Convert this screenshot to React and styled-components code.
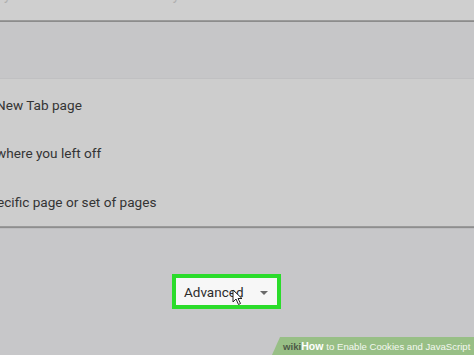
import { createGlobalStyle, styled } from "styled-components";

const GlobalStyle = createGlobalStyle`
  html, body {
    margin: 0;
    padding: 0;
    background: #c7c7c9;
    font-family: Roboto, "Liberation Sans", Arial, sans-serif;
  }
`;

const Page = styled.div`
  position: relative;
  width: 474px;
  height: 355px;
  overflow: hidden;
  background: #c7c7c9;
`;

const TopCard = styled.div`
  height: 20px;
  overflow: hidden;
  background: #cfcfcf;
  box-shadow: 0 1px 0 #9a9a9a, 0 2px 1px #8c8c8c;
`;

const CutText = styled.div`
  margin-top: -13px;
  padding-left: 4px;
  font-size: 14px;
  color: #8a8a8a;
  opacity: 0.45;
`;

const Band = styled.div`
  height: 56px;
  margin-top: 2px;
  background: #c6c6c8;
  border-bottom: 1px solid #c0c0c2;
`;

const Card = styled.div`
  display: flex;
  flex-direction: column;
  padding-top: 2px;
  height: 147px;
  box-sizing: border-box;
  background: #cdcdcd;
  box-shadow: 0 1px 0 #9a9a9a, 0 2px 1px #8e8e8e;
`;

const Row = styled.div`
  height: 49.5px;
  display: flex;
  align-items: center;
  margin-left: ${(p) => p.$shift}px;
  font-size: 13.6px;
  color: #343434;
  white-space: nowrap;
`;

const Footer = styled.div`
  padding: 48px 0 0 172px;
`;

const Button = styled.div`
  position: relative;
  box-sizing: border-box;
  width: 109px;
  height: 35px;
  display: flex;
  align-items: center;
  justify-content: space-between;
  padding: 0 9px 0 8px;
  background: #f7f7f7;
  border: 4px solid #2bdc2b;
  font-size: 13.5px;
  color: #2c2c2c;
`;

const Caret = styled.span`
  width: 0;
  height: 0;
  margin-top: 2px;
  border-left: 4.5px solid transparent;
  border-right: 4.5px solid transparent;
  border-top: 4.5px solid #6a6a6a;
`;

const Cursor = styled.svg`
  position: absolute;
  left: 56px;
  top: 11px;
`;

const Badge = styled.div`
  position: absolute;
  right: 0;
  bottom: 0;
  width: 202px;
  height: 18px;
  display: flex;
  align-items: center;
  padding-left: 11px;
  box-sizing: border-box;
  background: #98bf86;
  clip-path: polygon(8px 0, 100% 0, 100% 100%, 0 100%);
  font-family: "Liberation Sans", Arial, sans-serif;
  font-size: 9.6px;
  color: #f4f8f0;
  white-space: nowrap;
`;

const Wiki = styled.b`
  color: #4e5a48;
`;

const How = styled.b`
  color: #ffffff;
  font-size: 10.5px;
  margin-right: 3px;
`;

export default function App() {
  return (
    <Page>
      <GlobalStyle />
      <TopCard>
        <CutText>y Tabs and continue where you left off</CutText>
      </TopCard>
      <Band />
      <Card>
        <Row $shift={-4}>New Tab page</Row>
        <Row $shift={-4}>where you left off</Row>
        <Row $shift={-3}>ecific page or set of pages</Row>
      </Card>
      <Footer>
        <Button>
          Advanced
          <Caret />
          <Cursor width="12" height="17" viewBox="0 0 12 17">
            <path
              d="M1 1 L1 13 L4 10 L6.5 15.5 L8.5 14.5 L6 9.5 L10 9.5 Z"
              fill="#ffffff"
              stroke="#222"
              strokeWidth="1"
            />
          </Cursor>
        </Button>
      </Footer>
      <Badge>
        <Wiki>wiki</Wiki>
        <How>How</How>
        to Enable Cookies and JavaScript
      </Badge>
    </Page>
  );
}
